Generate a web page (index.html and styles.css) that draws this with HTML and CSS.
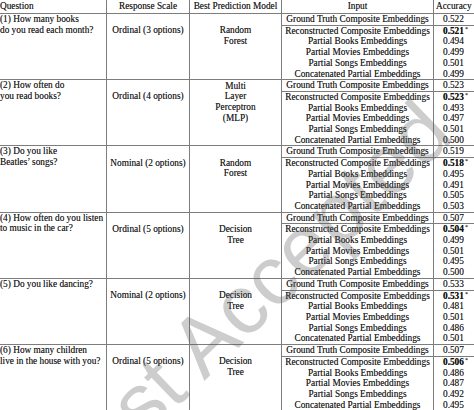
FILE: index.html
```html
<!DOCTYPE html>
<html>
<head>
<meta charset="utf-8">
<link rel="stylesheet" href="styles.css">
</head>
<body>
<div class="sheet">
  <div class="head">
    <div class="hc c1 left">Question</div>
    <div class="hc c2">Response Scale</div>
    <div class="hc c3">Best Prediction Model</div>
    <div class="hc c4">Input</div>
    <div class="hc c5">Accuracy</div>
  </div>

  <div class="group">
    <div class="q">(1) How many books<br>do you read each month?</div>
    <div class="scale"><div class="span3">Ordinal (3 options)</div></div>
    <div class="model"><div class="span4">Random<br>Forest</div></div>
    <div class="in gt">Ground Truth Composite Embeddings</div><div class="acc gt">0.522</div>
    <div class="in">Reconstructed Composite Embeddings</div><div class="acc"><b>0.521</b><sup>*</sup></div>
    <div class="in">Partial Books Embeddings</div><div class="acc">0.494</div>
    <div class="in">Partial Movies Embeddings</div><div class="acc">0.499</div>
    <div class="in">Partial Songs Embeddings</div><div class="acc">0.501</div>
    <div class="in">Concatenated Partial Embeddings</div><div class="acc">0.499</div>
  </div>

  <div class="group">
    <div class="q">(2) How often do<br>you read books?</div>
    <div class="scale"><div class="span3">Ordinal (4 options)</div></div>
    <div class="model"><div class="span4">Multi<br>Layer<br>Perceptron<br>(MLP)</div></div>
    <div class="in gt">Ground Truth Composite Embeddings</div><div class="acc gt">0.523</div>
    <div class="in">Reconstructed Composite Embeddings</div><div class="acc"><b>0.523</b><sup>*</sup></div>
    <div class="in">Partial Books Embeddings</div><div class="acc">0.493</div>
    <div class="in">Partial Movies Embeddings</div><div class="acc">0.497</div>
    <div class="in">Partial Songs Embeddings</div><div class="acc">0.501</div>
    <div class="in">Concatenated Partial Embeddings</div><div class="acc">0.500</div>
  </div>

  <div class="group">
    <div class="q">(3) Do you like<br>Beatles’ songs?</div>
    <div class="scale"><div class="span3">Nominal (2 options)</div></div>
    <div class="model"><div class="span4">Random<br>Forest</div></div>
    <div class="in gt">Ground Truth Composite Embeddings</div><div class="acc gt">0.519</div>
    <div class="in">Reconstructed Composite Embeddings</div><div class="acc"><b>0.518</b><sup>*</sup></div>
    <div class="in">Partial Books Embeddings</div><div class="acc">0.495</div>
    <div class="in">Partial Movies Embeddings</div><div class="acc">0.491</div>
    <div class="in">Partial Songs Embeddings</div><div class="acc">0.505</div>
    <div class="in">Concatenated Partial Embeddings</div><div class="acc">0.503</div>
  </div>

  <div class="group">
    <div class="q">(4) How often do you listen<br>to music in the car?</div>
    <div class="scale"><div class="span3">Ordinal (5 options)</div></div>
    <div class="model"><div class="span4">Decision<br>Tree</div></div>
    <div class="in gt">Ground Truth Composite Embeddings</div><div class="acc gt">0.507</div>
    <div class="in">Reconstructed Composite Embeddings</div><div class="acc"><b>0.504</b><sup>*</sup></div>
    <div class="in">Partial Books Embeddings</div><div class="acc">0.499</div>
    <div class="in">Partial Movies Embeddings</div><div class="acc">0.501</div>
    <div class="in">Partial Songs Embeddings</div><div class="acc">0.495</div>
    <div class="in">Concatenated Partial Embeddings</div><div class="acc">0.500</div>
  </div>

  <div class="group">
    <div class="q">(5) Do you like dancing?</div>
    <div class="scale"><div class="span3">Nominal (2 options)</div></div>
    <div class="model"><div class="span4">Decision<br>Tree</div></div>
    <div class="in gt">Ground Truth Composite Embeddings</div><div class="acc gt">0.533</div>
    <div class="in">Reconstructed Composite Embeddings</div><div class="acc"><b>0.531</b><sup>*</sup></div>
    <div class="in">Partial Books Embeddings</div><div class="acc">0.481</div>
    <div class="in">Partial Movies Embeddings</div><div class="acc">0.501</div>
    <div class="in">Partial Songs Embeddings</div><div class="acc">0.486</div>
    <div class="in">Concatenated Partial Embeddings</div><div class="acc">0.501</div>
  </div>

  <div class="group">
    <div class="q">(6) How many children<br>live in the house with you?</div>
    <div class="scale"><div class="span3">Ordinal (5 options)</div></div>
    <div class="model"><div class="span4">Decision<br>Tree</div></div>
    <div class="in gt">Ground Truth Composite Embeddings</div><div class="acc gt">0.507</div>
    <div class="in">Reconstructed Composite Embeddings</div><div class="acc"><b>0.506</b><sup>*</sup></div>
    <div class="in">Partial Books Embeddings</div><div class="acc">0.486</div>
    <div class="in">Partial Movies Embeddings</div><div class="acc">0.487</div>
    <div class="in">Partial Songs Embeddings</div><div class="acc">0.492</div>
    <div class="in">Concatenated Partial Embeddings</div><div class="acc">0.495</div>
  </div>
</div>
<div class="watermark">Just Accepted</div>
</body>
</html>
```

FILE: styles.css
```css
html, body {
  margin: 0;
  padding: 0;
  background: #fff;
  width: 474px;
  height: 410px;
  overflow: hidden;
  position: relative;
}
.sheet {
  margin-left: -2px;
  width: 500px;
  font-family: "Liberation Serif", "Times New Roman", serif;
  font-size: 9.3px;
  color: #262626;
  line-height: 10.7px;
  text-shadow: 0 0 0.4px rgba(0, 0, 0, 0.6);
}
.head, .group {
  display: grid;
  grid-template-columns: 109px 83px 92px 152px 64px;
}
.head {
  height: 13px;
  border-bottom: 1.5px solid #7d7d7d;
}
.hc {
  text-align: center;
  line-height: 12px;
  white-space: nowrap;
  border-right: 1px solid #7d7d7d;
}
.hc.left { text-align: left; padding-left: 2px; }
.hc.c5 { text-align: left; padding-left: 2px; border-right: none; }
.group {
  border-bottom: 1px solid #7d7d7d;
}
.q {
  grid-column: 1;
  grid-row: 1 / 7;
  padding-left: 2px;
  white-space: nowrap;
  border-right: 1px solid #7d7d7d;
}
.scale {
  grid-column: 2;
  grid-row: 1 / 7;
  border-right: 1px solid #7d7d7d;
}
.model {
  grid-column: 3;
  grid-row: 1 / 7;
  border-right: 1px solid #7d7d7d;
}
.span3, .span4 {
  display: flex;
  align-items: center;
  justify-content: center;
  text-align: center;
  white-space: nowrap;
}
.span3 { height: 33px; }
.span4 { height: 43.8px; }
.in {
  grid-column: 4;
  text-align: center;
  white-space: nowrap;
  border-right: 1px solid #7d7d7d;
}
.acc {
  grid-column: 5;
  padding-left: 9px;
  white-space: nowrap;
}
.gt { border-bottom: 1px solid #7d7d7d; }
.acc b { font-weight: bold; color: #111; }
.acc sup {
  font-size: 6px;
  line-height: 0;
  vertical-align: 3px;
  margin-left: 1px;
}
.watermark {
  position: absolute;
  left: 80px;
  top: 430px;
  font-family: "Liberation Sans", Arial, sans-serif;
  font-size: 84px;
  line-height: 84px;
  white-space: nowrap;
  color: rgba(90, 90, 90, 0.3);
  transform: rotate(-44deg);
  transform-origin: 0 71px;
  pointer-events: none;
}
```
